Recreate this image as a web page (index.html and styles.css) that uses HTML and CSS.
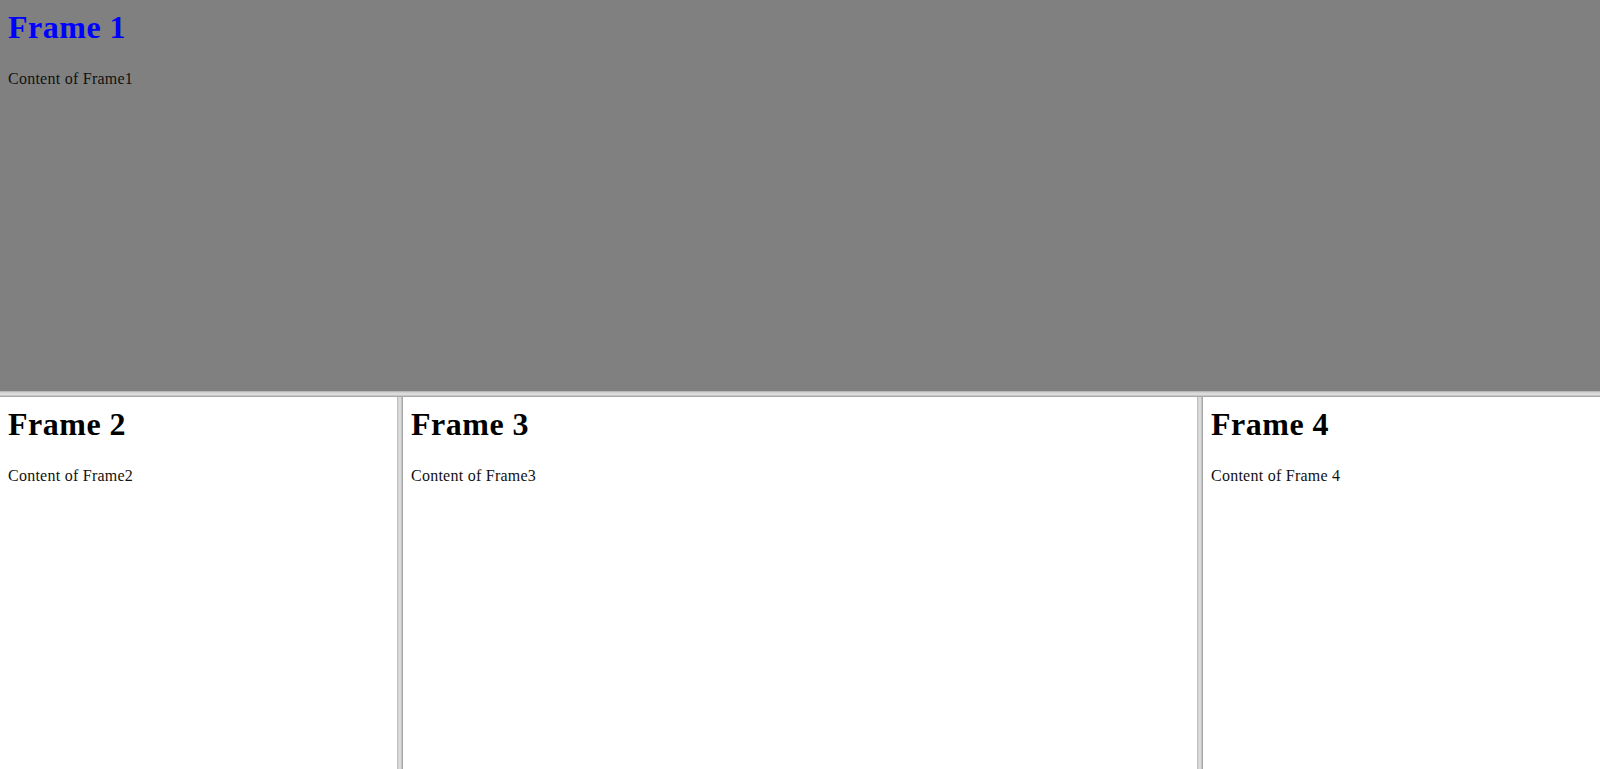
FILE: index.html
```html
<!DOCTYPE html>
<html>
<head>
<meta charset="utf-8">
<title>Frames</title>
<link rel="stylesheet" href="styles.css">
</head>
<body>
<div class="frameset">
  <div class="frame frame-top">
    <h1 class="title title-blue">Frame 1</h1>
    <p class="text">Content of Frame1</p>
  </div>
  <div class="hborder"></div>
  <div class="row">
    <div class="frame">
      <h1 class="title">Frame 2</h1>
      <p class="text">Content of Frame2</p>
    </div>
    <div class="vborder"></div>
    <div class="frame">
      <h1 class="title">Frame 3</h1>
      <p class="text">Content of Frame3</p>
    </div>
    <div class="vborder"></div>
    <div class="frame">
      <h1 class="title">Frame 4</h1>
      <p class="text">Content of Frame 4</p>
    </div>
  </div>
</div>
</body>
</html>
```
FILE: styles.css
```css
html, body {
  margin: 0;
  padding: 0;
  height: 100%;
  overflow: hidden;
}
body {
  font-family: "Liberation Serif", "Times New Roman", serif;
  color: #000;
  background: #fff;
}
.frameset {
  display: grid;
  grid-template-rows: 391px 6px 1fr;
  height: 100vh;
}
.row {
  display: grid;
  grid-template-columns: 1fr 6px 2fr 6px 1fr;
  min-height: 0;
}
.frame {
  overflow: hidden;
  padding: 0 8px;
  background: #fff;
  min-width: 0;
}
.frame-top {
  background: #808080;
}
.title {
  font-size: 32px;
  font-weight: bold;
  margin: 9px 0 24px;
  line-height: normal;
  letter-spacing: 0.5px;
}
.title-blue {
  color: #0000ff;
}
.text {
  font-size: 16px;
  margin: 16px 0;
  letter-spacing: 0.25px;
  color: #111;
}
.hborder {
  background: linear-gradient(to bottom, #b8b8b8 0 1px, #d0d0d0 1px 2px, #dcdcdc 2px 4px, #c8c8c8 4px 5px, #a8a8a8 5px 6px);
}
.vborder {
  background: linear-gradient(to right, #c0c0c0 0 1px, #d4d4d4 1px 2px, #dcdcdc 2px 4px, #c4c4c4 4px 5px, #a8a8a8 5px 6px);
}
```
